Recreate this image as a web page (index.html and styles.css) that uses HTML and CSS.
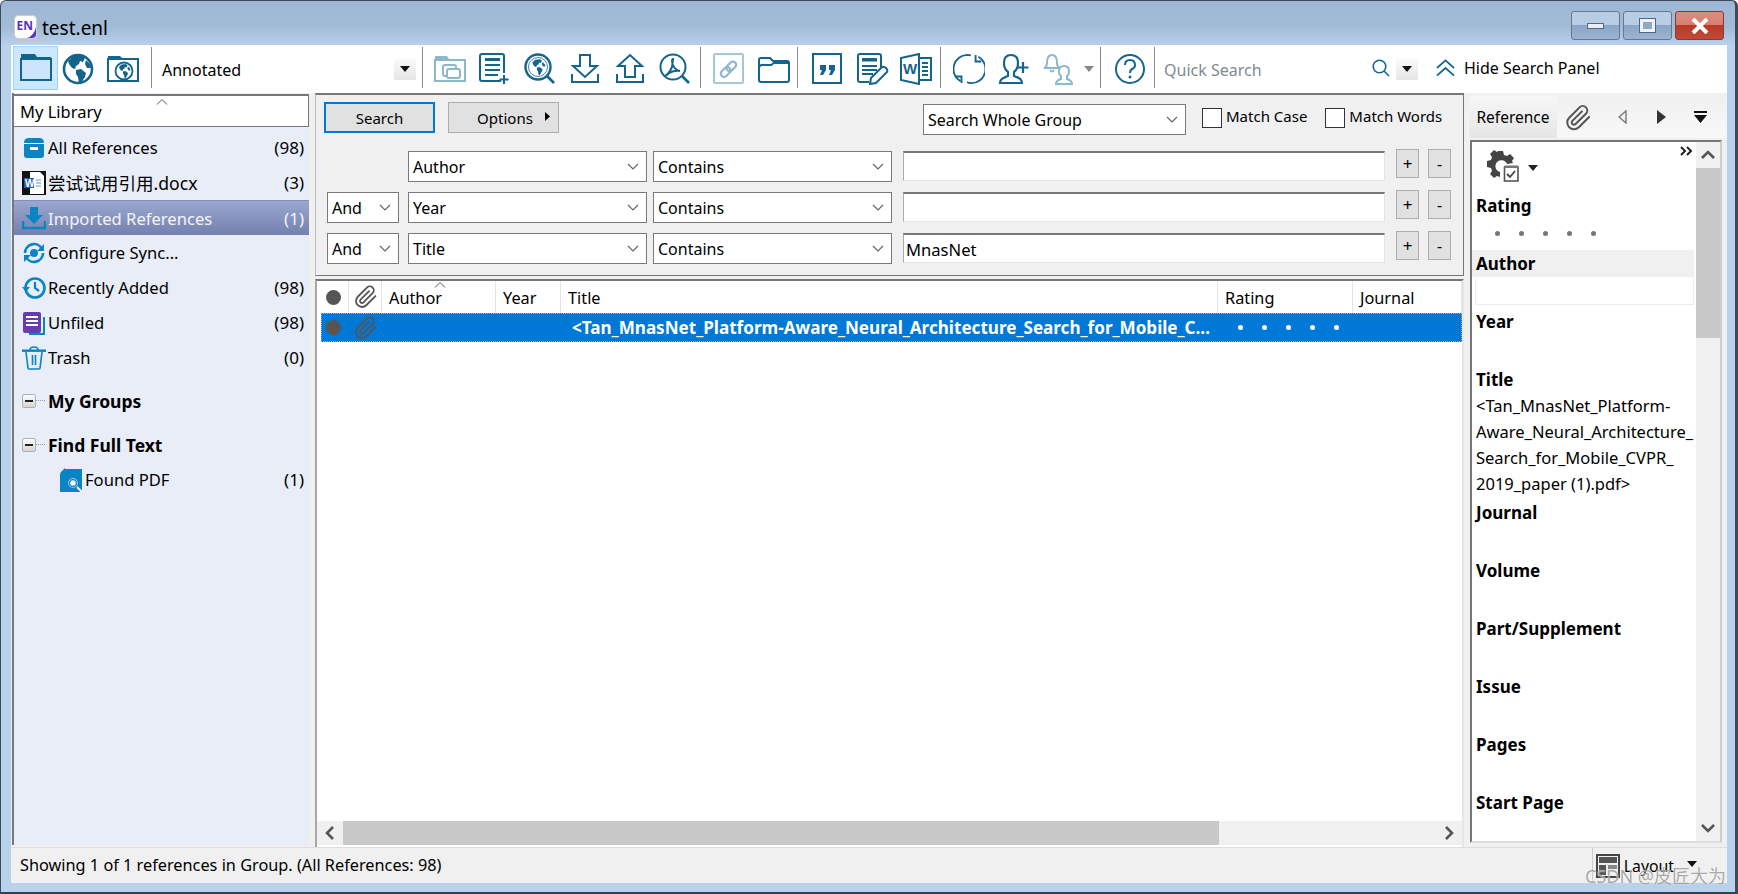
FILE: index.html
```html
<!DOCTYPE html>
<html lang="en">
<head>
<meta charset="utf-8">
<title>test.enl</title>
<link rel="stylesheet" href="styles.css">
</head>
<body>
<svg class="defs" width="0" height="0" aria-hidden="true">
  <symbol id="continents" viewBox="0 0 32 32">
    <path d="M6 8l5-5 9-1 3 3-2 4-3-1-1 3-3 2-1 3-3-1-3-4z"/>
    <path d="M14 17l5-1 5 4-1 4-4 6-2 0-1-6-2-3z"/>
    <path d="M24 7l4 4 1 4-4 0-2-4z"/>
  </symbol>
  <symbol id="clip" viewBox="0 0 24 24">
    <path fill="none" stroke="currentColor" stroke-width="1.8" stroke-linecap="round" stroke-linejoin="round" d="M21.44 11.05l-9.19 9.19a6 6 0 0 1-8.49-8.49l9.19-9.19a4 4 0 0 1 5.66 5.66l-9.2 9.19a2 2 0 0 1-2.83-2.83l8.49-8.48"/>
  </symbol>
  <symbol id="chev" viewBox="0 0 12 8">
    <path fill="none" stroke="#666" stroke-width="1.2" d="M1 1l5 5 5-5"/>
  </symbol>
  <symbol id="caret" viewBox="0 0 10 6">
    <path d="M0 0h10L5 6z"/>
  </symbol>
</svg>

<div class="window">
  <header class="titlebar">
    <svg class="app-icon" viewBox="0 0 23 24"><rect x=".5" y=".5" width="22" height="23" rx="4" fill="#fff" stroke="#ccc"/><path d="M22 12v7q0 4-4 4h-5q7-2 9-11z" fill="#5b2fc0"/><text x="2.5" y="15" class="app-en">EN</text></svg>
    <span class="title-text">test.enl</span>
    <div class="winbtns">
      <div class="winbtn"><span class="gl-min"></span></div>
      <div class="winbtn"><span class="gl-max"></span></div>
      <div class="winbtn close"><svg viewBox="0 0 18 16" class="gl-x"><path d="M2 1l14 14M16 1L2 15" stroke="#fff" stroke-width="4"/></svg></div>
    </div>
  </header>

  <div class="toolbar">
    <div class="tb-active">
      <svg class="ic" viewBox="0 0 32 32"><path d="M1 2h14l2 3h14v4H1z" fill="#14648c"/><rect x="1" y="7" width="30" height="21" fill="#cbe6fc" stroke="#14648c" stroke-width="2"/></svg>
    </div>
    <svg class="ic ic-globe" viewBox="0 0 32 32"><circle cx="16" cy="16" r="14" fill="#fff" stroke="#14648c" stroke-width="2.6"/><use href="#continents" fill="#14648c" width="32" height="32"/></svg>
    <svg class="ic ic-fglobe" viewBox="0 0 32 32"><path d="M1 3h12l2 2h16v3H1z" fill="#14648c"/><rect x="1" y="6" width="30" height="22" fill="#fff" stroke="#14648c" stroke-width="2"/><circle cx="17" cy="18" r="8.5" fill="#fff" stroke="#14648c" stroke-width="1.8"/><use href="#continents" x="9" y="10" width="16" height="16" fill="#14648c"/></svg>
    <div class="sep sep-a"></div>
    <div class="style-name">Annotated</div>
    <div class="dropbtn"><svg class="caret"><use href="#caret"/></svg></div>
    <div class="sep sep-b"></div>

    <svg class="ic ic1" viewBox="0 0 32 32"><g fill="none" stroke="#8db8cc" stroke-width="2"><path d="M1 7h30v21H1z"/><rect x="9" y="12" width="13" height="11" rx="2"/><rect x="13" y="16" width="13" height="9" rx="2" fill="#fff"/></g><path d="M1 3h12l2 3H1z" fill="#8db8cc"/></svg>
    <svg class="ic gap" viewBox="0 0 32 32"><g fill="none" stroke="#14648c" stroke-width="2"><path d="M22 28H3q-2 0-2-2V3q0-2 2-2h20q2 0 2 2v17"/><path d="M6 12h15M6 17h15M6 22h13"/><path d="M25 22v9M20.5 26.5h9"/></g><rect x="6" y="5" width="15" height="3" fill="#14648c"/></svg>
    <svg class="ic gap" viewBox="0 0 32 32"><circle cx="14" cy="14" r="12.5" fill="#fff" stroke="#14648c" stroke-width="2.4"/><use href="#continents" x="5" y="5" width="18" height="18" fill="#14648c"/><circle cx="14" cy="14" r="9.5" fill="none" stroke="#14648c" stroke-width=".8"/><path d="M23 23l7 7" stroke="#14648c" stroke-width="2.6"/></svg>
    <svg class="ic gap" viewBox="0 0 32 32"><g fill="none" stroke="#14648c" stroke-width="2"><path d="M11 2h10v11h7L16 24 4 13h7z"/><path d="M3 21v8h26v-8"/></g></svg>
    <svg class="ic gap" viewBox="0 0 32 32"><g fill="none" stroke="#14648c" stroke-width="2"><path d="M11 24V13H4L16 2l12 11h-7v11z"/><path d="M3 21v8h26v-8"/></g></svg>
    <svg class="ic gap" viewBox="0 0 32 32"><circle cx="14" cy="14" r="12.5" fill="#fff" stroke="#14648c" stroke-width="2"/><path d="M14 6q-2 0 0 6 2 5 7 6-5-1-11 2-3 3-4 3 4-2 7-9 1-8 1-8z" fill="none" stroke="#14648c" stroke-width="2"/><path d="M23 23l7 7" stroke="#14648c" stroke-width="2.6"/></svg>
    <div class="sep sep-c"></div>

    <svg class="ic" viewBox="0 0 32 32"><rect x="1" y="1" width="29" height="29" rx="1" fill="#fff" stroke="#a5c8d8" stroke-width="2"/><g fill="none" stroke="#8db8cc" stroke-width="2.2" transform="rotate(-45 16 16)"><rect x="6" y="12.5" width="11" height="6.5" rx="3.2"/><rect x="14" y="12.5" width="11" height="6.5" rx="3.2"/></g></svg>
    <svg class="ic gap" viewBox="0 0 32 32"><g fill="none" stroke="#14648c" stroke-width="2"><path d="M1 13V7q0-2 2-2h9l3 3h14q2 0 2 2v17q0 2-2 2H3q-2 0-2-2z"/><path d="M1 15q0-3 3-3h9l3-2h15"/></g></svg>
    <div class="sep sep-d"></div>

    <svg class="ic" viewBox="0 0 32 32"><rect x="1" y="1" width="28" height="29" fill="#fff" stroke="#14648c" stroke-width="2"/><path d="M8 12h6v5l-3 5H8l2-5H8zM17 12h6v5l-3 5h-3l2-5h-2z" fill="#14648c"/></svg>
    <svg class="ic gap" viewBox="0 0 32 32"><g fill="none" stroke="#14648c" stroke-width="2"><path d="M12 29H3q-2 0-2-2V3q0-2 2-2h19q2 0 2 2v12"/><path d="M5 13h15M5 17h15M5 21h11"/><path d="M13 31l1-6 11-11q2-1 4 1t1 4L19 30z" fill="#fff"/></g><rect x="5" y="5" width="15" height="3.5" fill="#14648c"/></svg>
    <svg class="ic gap-s" viewBox="0 0 32 32"><path d="M1 5l18-4v30L1 27z" fill="#fff" stroke="#14648c" stroke-width="2"/><path d="M19 5h12v22H19M22 10h6M22 14h6M22 18h6M22 22h6" fill="none" stroke="#14648c" stroke-width="2"/><text x="3" y="21" class="ic-w">W</text></svg>
    <div class="sep sep-e"></div>

    <svg class="ic" viewBox="0 0 34 34"><g fill="none" stroke="#14648c" stroke-width="2"><path d="M27 4a15 15 0 0 1-8 28q-2 0-4-1"/><path d="M8 30A15 15 0 0 1 15 2q2 0 4 .5"/><path d="M24 2v7h6M2 25h7v7"/></g></svg>
    <svg class="ic gap" viewBox="0 0 32 32"><g fill="none" stroke="#14648c" stroke-width="2.2"><path d="M2 30c0-4 3-5 8-7v-4q-4-3-4-9 0-8 7-8t7 8q0 6-4 9v4c5 2 8 3 8 7z"/><path d="M25 9v11M19.5 14.5h11"/></g></svg>
    <svg class="ic gap" viewBox="0 0 32 32"><g fill="none" stroke="#8db8cc" stroke-width="2"><path d="M1 15q3-1 3-5 0-8 5-8t5 8q0 4 3 5z"/><path d="M7 17q2 3 4 0"/><path d="M13 31c0-3 2-4 5-5v-3q-2-1-2-5 0-5 5-5t5 5q0 4-2 5v3c3 1 5 2 5 5z" fill="#fff"/></g></svg>
    <svg class="caret caret-dim"><use href="#caret"/></svg>
    <div class="sep sep-f"></div>
    <svg class="ic" viewBox="0 0 32 32"><circle cx="16" cy="16" r="14" fill="#fff" stroke="#14648c" stroke-width="2"/><path d="M11 12q0-5 5-5t5 5q0 3-3 4-2 1-2 4" fill="none" stroke="#14648c" stroke-width="2"/><circle cx="16" cy="24" r="1.5" fill="#14648c"/></svg>
    <div class="sep sep-g"></div>

    <div class="quick">Quick Search</div>
    <svg class="ic-search" viewBox="0 0 18 18"><circle cx="7.5" cy="7.5" r="6.3" fill="none" stroke="#14648c" stroke-width="1.6"/><path d="M12 12l5 5" stroke="#14648c" stroke-width="1.6"/></svg>
    <div class="dropbtn drop-q"><svg class="caret"><use href="#caret"/></svg></div>
    <svg class="ic-chev" viewBox="0 0 20 18"><path d="M1 9l9-8 9 8M1 17l9-8 9 8" fill="none" stroke="#14648c" stroke-width="1.8"/></svg>
    <div class="hide-label">Hide Search Panel</div>
  </div>

  <div class="main">
    <aside class="sidebar">
      <div class="library">My Library<svg class="sort sort-lib" viewBox="0 0 12 6"><path d="M1 5.5l5-5 5 5" fill="none" stroke="#555"/></svg></div>
      <ul class="groups">
        <li class="grp">
          <svg class="gi" viewBox="0 0 24 24"><path d="M2 7q0-5 5-5h10q5 0 5 5v12q0 3-3 3H5q-3 0-3-3z" fill="#0b84c4"/><rect x="8" y="11" width="8" height="3" fill="#fff"/><rect x="2" y="7" width="20" height="1" fill="#fff"/></svg>
          <span class="gname">All References</span><span class="gcount">(98)</span>
        </li>
        <li class="grp">
          <svg class="gi" viewBox="0 0 24 24"><rect width="24" height="24" fill="#111"/><path d="M8 1h10l4 4v18H8z" fill="#fff"/><rect x="2" y="7" width="10" height="10" fill="#1f5fbf"/><text x="3" y="15.5" class="gi-w">W</text><path d="M14 9h5M14 12h5M14 15h5" stroke="#5a8fd0"/></svg>
          <span class="gname gname-cjk">尝试试用引用.docx</span><span class="gcount">(3)</span>
        </li>
        <li class="grp grp-sel">
          <svg class="gi" viewBox="0 0 24 24"><path d="M8 1h8v8h5l-9 9-9-9h5z" fill="#0b84c4"/><path d="M1 15v7h22v-7" fill="none" stroke="#0b84c4" stroke-width="2.5"/></svg>
          <span class="gname">Imported References</span><span class="gcount">(1)</span>
        </li>
        <li class="grp">
          <svg class="gi" viewBox="0 0 24 24"><g fill="none" stroke="#0b84c4" stroke-width="2.6"><path d="M3 12A9 9 0 0 1 20 8"/><path d="M21 12A9 9 0 0 1 4 16"/></g><path d="M22 3v7h-7zM2 21v-7h7z" fill="#0b84c4"/><circle cx="12" cy="12" r="4" fill="#0b84c4"/></svg>
          <span class="gname">Configure Sync...</span>
        </li>
        <li class="grp">
          <svg class="gi" viewBox="0 0 24 24"><circle cx="13" cy="12" r="9.5" fill="none" stroke="#0b84c4" stroke-width="2.6"/><path d="M0 11h8l-4 5z" fill="#0b84c4"/><path d="M13 6v6l4 3" fill="none" stroke="#0b84c4" stroke-width="2.2"/></svg>
          <span class="gname">Recently Added</span>
          <span class="gcount">(98)</span>
        </li>
        <li class="grp">
          <svg class="gi" viewBox="0 0 24 24"><path d="M22 6v17H7" fill="none" stroke="#0b84c4" stroke-width="2"/><rect x="1" y="1" width="18" height="21" rx="2" fill="#6a3ab0"/><path d="M4 6h12M4 10h12M4 14h12" stroke="#fff" stroke-width="2"/></svg>
          <span class="gname">Unfiled</span><span class="gcount">(98)</span>
        </li>
        <li class="grp">
          <svg class="gi" viewBox="0 0 24 24"><g fill="none" stroke="#0b84c4" stroke-width="1.6"><path d="M4 6l2 16q0 1 1 1h10q1 0 1-1l2-16"/><path d="M10.5 9v10M13.5 9v10"/><path d="M8 4q0-3 4-3t4 3"/></g><rect y="3.5" width="24" height="2.4" fill="#0b84c4"/></svg>
          <span class="gname">Trash</span><span class="gcount">(0)</span>
        </li>
        <li class="grp grp-head grp-head-a">
          <span class="expander"><span class="minus"></span></span><span class="dots-line"></span>
          <span class="gname bold">My Groups</span>
        </li>
        <li class="grp grp-head grp-head-b">
          <span class="expander"><span class="minus"></span></span><span class="dots-line"></span>
          <span class="gname bold">Find Full Text</span>
        </li>
        <li class="grp grp-child">
          <svg class="gi" viewBox="0 0 24 24"><path d="M6 1h17v23H1V6z" fill="#0b84c4"/><path d="M1 5l5-5v5z" fill="#0b84c4"/><circle cx="14" cy="15" r="5.5" fill="#fff" stroke="#0b84c4" stroke-width="1.5"/><circle cx="14" cy="15" r="3.5" fill="#fff" stroke="#0b84c4" stroke-width="1.5"/><path d="M18 19l5 5" stroke="#fff" stroke-width="2"/></svg>
          <span class="gname">Found PDF</span><span class="gcount">(1)</span>
        </li>
      </ul>
    </aside>

    <section class="center">
      <div class="search">
        <div class="search-top">
          <button class="btn btn-search">Search</button>
          <button class="btn btn-options">Options<svg class="tri" viewBox="0 0 5 9"><path d="M0 0l5 4.5L0 9z"/></svg></button>
          <div class="sel sel-group">Search Whole Group<svg class="chev"><use href="#chev"/></svg></div>
          <span class="box box-a"></span><span class="lbl">Match Case</span>
          <span class="box box-b"></span><span class="lbl">Match Words</span>
        </div>
        <div class="crit">
          <div class="sel-spacer"></div>
          <div class="sel sel-field">Author<svg class="chev"><use href="#chev"/></svg></div>
          <div class="sel sel-op">Contains<svg class="chev"><use href="#chev"/></svg></div>
          <div class="input"></div>
          <div class="pm pm-plus">+</div><div class="pm pm-minus">-</div>
        </div>
        <div class="crit">
          <div class="sel sel-bool">And<svg class="chev"><use href="#chev"/></svg></div>
          <div class="sel sel-field">Year<svg class="chev"><use href="#chev"/></svg></div>
          <div class="sel sel-op">Contains<svg class="chev"><use href="#chev"/></svg></div>
          <div class="input"></div>
          <div class="pm pm-plus">+</div><div class="pm pm-minus">-</div>
        </div>
        <div class="crit">
          <div class="sel sel-bool">And<svg class="chev"><use href="#chev"/></svg></div>
          <div class="sel sel-field">Title<svg class="chev"><use href="#chev"/></svg></div>
          <div class="sel sel-op">Contains<svg class="chev"><use href="#chev"/></svg></div>
          <div class="input">MnasNet</div>
          <div class="pm pm-plus">+</div><div class="pm pm-minus">-</div>
        </div>
      </div>

      <div class="table">
        <div class="thead">
          <div class="th c-dot"><span class="dot"></span></div>
          <div class="th c-clip"><svg class="clip"><use href="#clip"/></svg></div>
          <div class="th c-author">Author<svg class="sort sort-au" viewBox="0 0 12 6"><path d="M1 5.5l5-5 5 5" fill="none" stroke="#555"/></svg></div>
          <div class="th c-year">Year</div>
          <div class="th c-title">Title</div>
          <div class="th c-rating">Rating</div>
          <div class="th c-journal">Journal</div>
        </div>
        <div class="trow">
          <div class="td r-dot"><span class="dot"></span></div>
          <div class="td r-clip"><svg class="clip"><use href="#clip"/></svg></div>
          <div class="td r-blank"></div>
          <div class="td r-title">&lt;Tan_MnasNet_Platform-Aware_Neural_Architecture_Search_for_Mobile_C...</div>
          <div class="td r-rating"><i></i><i></i><i></i><i></i><i></i></div>
        </div>
        <div class="tbody-fill"></div>
        <div class="hscroll">
          <div class="arrow"><svg viewBox="0 0 10 14" class="ar-h"><path d="M8 1L2 7l6 6" fill="none" stroke="#555" stroke-width="2.6"/></svg></div>
          <div class="hthumb"></div>
          <div class="hrest"></div>
          <div class="arrow"><svg viewBox="0 0 10 14" class="ar-h"><path d="M2 1l6 6-6 6" fill="none" stroke="#555" stroke-width="2.6"/></svg></div>
        </div>
      </div>
    </section>

    <aside class="right">
      <div class="tabs">
        <div class="tab">Reference</div>
        <svg class="clip tab-clip"><use href="#clip"/></svg>
        <svg class="tab-tri tab-prev" viewBox="0 0 9 14"><path d="M8 1L1 7l7 6z" fill="none" stroke="#777" stroke-width="1.4"/></svg>
        <svg class="tab-tri tab-next" viewBox="0 0 9 14"><path d="M0 0l9 7-9 7z" fill="#333"/></svg>
        <svg class="tab-more" viewBox="0 0 13 12"><path d="M0 0h13v2H0zM0 4h13L6.500 12z" fill="#111"/></svg>
      </div>
      <div class="pane">
        <div class="pane-body">
          <div class="pane-tools">
            <svg class="gear" viewBox="0 0 32 32"><path d="M11 1h5l1 4 3 1 3-2 4 4-2 3 1 2-6 1a6 6 0 1 0-7 8l0 5-3-1-3 2-4-4 2-3-1-3-4-1v-6l4-1 1-3-2-3 4-4 3 2 1-1z" fill="#444"/><rect x="17.5" y="17" width="13.5" height="14" fill="#fff" stroke="#555" stroke-width="1.6"/><path d="M20 24l3 3 5-6" fill="none" stroke="#444" stroke-width="1.8"/><rect x="17.5" y="15.5" width="13.5" height="2.5" fill="#777"/></svg>
            <svg class="caret caret-gear"><use href="#caret"/></svg>
            <svg class="more-r" viewBox="0 0 13 10"><path d="M1 1l4 4-4 4M7 1l4 4-4 4" fill="none" stroke="#222" stroke-width="2"/></svg>
          </div>
          <div class="fld"><div class="fl">Rating</div><div class="fv rating"><i></i><i></i><i></i><i></i><i></i></div></div>
          <div class="fld fld-on"><div class="fl">Author</div><div class="fv fv-edit"></div></div>
          <div class="fld"><div class="fl">Year</div></div>
          <div class="fld fld-auto"><div class="fl">Title</div><div class="fv fv-text">&lt;Tan_MnasNet_Platform-<br>Aware_Neural_Architecture_<br>Search_for_Mobile_CVPR_<br>2019_paper (1).pdf&gt;</div></div>
          <div class="fld"><div class="fl">Journal</div></div>
          <div class="fld"><div class="fl">Volume</div></div>
          <div class="fld"><div class="fl">Part/Supplement</div></div>
          <div class="fld"><div class="fl">Issue</div></div>
          <div class="fld"><div class="fl">Pages</div></div>
          <div class="fld"><div class="fl">Start Page</div></div>
        </div>
        <div class="vscroll">
          <div class="varrow"><svg viewBox="0 0 14 10" class="ar-v"><path d="M1 8l6-6 6 6" fill="none" stroke="#555" stroke-width="2.6"/></svg></div>
          <div class="vthumb"></div>
          <div class="vrest"></div>
          <div class="varrow"><svg viewBox="0 0 14 10" class="ar-v"><path d="M1 2l6 6 6-6" fill="none" stroke="#555" stroke-width="2.6"/></svg></div>
        </div>
      </div>
    </aside>
  </div>

  <footer class="status">
    <span class="status-text">Showing 1 of 1 references in Group. (All References: 98)</span>
    <div class="layout">
      <svg class="layout-ic" viewBox="0 0 24 24"><rect x="1" y="1" width="22" height="22" fill="none" stroke="#444" stroke-width="2"/><path d="M3 3h18v6H3zM3 11h7v10H3z" fill="#555"/><path d="M12 11h9v4h-9z" fill="#888"/></svg>
      <span class="layout-text">Layout</span>
      <svg class="caret caret-layout"><use href="#caret"/></svg>
    </div>
  </footer>
  <div class="watermark">CSDN @皮匠大为</div>
</div>
</body>
</html>
```
FILE: styles.css
```css
* { box-sizing: border-box; }
html, body { margin: 0; padding: 0; }
body {
  width: 1738px; height: 894px; overflow: hidden;
  font-family: "Noto Sans", "Noto Sans CJK SC", sans-serif;
  font-size: 16px; color: #000;
}
.defs { position: absolute; }
ul { list-style: none; margin: 0; padding: 0; }
button { font: inherit; color: inherit; padding: 0; }

.window {
  position: relative;
  width: 1738px; height: 894px;
  border: 1px solid #404a55; border-bottom: 2px solid #1a4a5a; border-right-width: 3px;
  border-radius: 6px 6px 0 0;
  padding: 1px 8px 0 10px;
  background: linear-gradient(#9db7d4 0, #a2bbd7 26px, #b8d1ec 45px, #b9d2ec 100%);
  display: flex; flex-direction: column;
}

/* title bar */
.titlebar { height: 43px; flex: none; display: flex; align-items: center; padding: 8px 3px 0 3px; }
.app-icon { width: 23px; height: 24px; margin-right: 5px; margin-top: -2px; }
.app-en { font: 700 12px "Noto Sans", sans-serif; fill: #5b2fc0; }
.title-text { font-size: 19px; line-height: 24px; }
.winbtns { margin-left: auto; display: flex; gap: 3px; margin-top: -4px; }
.winbtn {
  width: 49px; height: 29px; border: 1px solid #66788e; border-radius: 3px;
  background: linear-gradient(#b8cde4 0, #b8cde4 50%, #8aa6c6 50%, #9ab5d3 100%);
  display: flex; align-items: center; justify-content: center;
}
.winbtn.close { background: linear-gradient(#dc8d80 0, #d47f70 50%, #b73a28 50%, #c04a35 100%); border-color: #8a3a30; }
.gl-min { width: 17px; height: 6px; background: #e8eef5; border: 1px solid #556a80; }
.gl-max { width: 15px; height: 13px; border: 3px solid #eef2f7; outline: 1px solid #4f6880; background: #90a9c5; }
.gl-x { width: 18px; height: 16px; }

/* toolbar */
.toolbar { height: 48px; flex: none; background: #fff; display: flex; align-items: center; padding-left: 2px; }
.tb-active {
  width: 45px; height: 44px; margin-top: -3px;
  background: #cce8ff; border: 1px solid #99d1ff;
  display: flex; align-items: center; justify-content: center;
}
.ic { width: 32px; height: 32px; flex: none; }
.ic-w { font: 700 15px "Liberation Sans", sans-serif; fill: #14648c; }
.ic-globe { margin-left: 4px; }
.ic-fglobe { margin-left: 13px; }
.gap { margin-left: 13px; }
.gap-s { margin-left: 11px; }
.sep { width: 1px; height: 41px; background: #8c8c8c; flex: none; margin-top: -3px; }
.sep-a { margin-left: 12px; }
.sep-b { margin-left: 6px; margin-right: 11px; }
.sep-c { margin-left: 9px; margin-right: 12px; }
.sep-d { margin-left: 7px; margin-right: 14px; }
.sep-e { margin-left: 8px; margin-right: 12px; }
.sep-f { margin-left: 6px; margin-right: 13px; }
.sep-g { margin-left: 8px; margin-right: 9px; }
.style-name { width: 242px; padding-left: 10px; margin-top: 2px; }
.dropbtn {
  width: 22px; height: 22px; background: linear-gradient(#fbfbfb, #e6e6e6);
  display: flex; align-items: center; justify-content: center; flex: none;
}
.caret { width: 10px; height: 6px; fill: #111; flex: none; }
.caret-dim { fill: #888; margin-left: 9px; }
.quick { width: 208px; color: #808a90; margin-top: 2px; }
.ic-search { width: 18px; height: 18px; margin-top: -3px; }
.drop-q { margin-left: 6px; }
.ic-chev { width: 19px; height: 18px; margin-left: 18px; margin-top: -2px; }
.hide-label { margin-left: 9px; margin-top: -2px; }

/* layout */
.main { height: 754px; flex: none; display: flex; background: #f0f0f0; padding-left: 1px; }

/* sidebar */
.sidebar { width: 297px; flex: none; background: #e8edf8; border-left: 2px solid #777; height: 752px; }
.library {
  position: relative; height: 33px; background: #fff;
  border: 1px solid #777; border-top-width: 2px; border-left: 0;
  padding-left: 6px; line-height: 31px; font-size: 16.5px;
  margin-top: 1px;
}
.sort { position: absolute; width: 12px; height: 6px; }
.sort-lib { left: 142px; top: 3px; }
.groups { padding-top: 3px; }
.grp { height: 35px; display: flex; align-items: center; padding: 0 5px 0 8px; }
.gi { width: 24px; height: 24px; flex: none; margin-right: 2px; }
.gi-w { font: 700 10px "Liberation Sans", sans-serif; fill: #fff; }
.gname { flex: 1; white-space: nowrap; font-size: 16.6px; }
.gname-cjk { font-size: 17.6px; }
.gcount { flex: none; font-size: 17px; }
.grp-sel { background: linear-gradient(#9aa8cf, #7480ae); color: #f4f4fa; border-top: 1px solid #8290bb; }
.grp-head-a { margin-top: 8px; }
.grp-head-b { margin-top: 9px; }
.gname.bold { font-weight: 700; font-size: 17.5px; }
.expander {
  width: 14px; height: 14px; flex: none; border: 1px solid #a3b3c8; border-radius: 2px;
  background: linear-gradient(#fff, #d8d4c8);
  display: flex; align-items: center; justify-content: center;
}
.minus { width: 8px; height: 2px; background: #222; }
.dots-line { width: 9px; flex: none; border-top: 1px dotted #8fa0b8; margin-right: 3px; }
.grp-child { padding-left: 45px; }

/* center */
.center { width: 1149px; flex: none; margin-left: 6px; display: flex; flex-direction: column; height: 754px; }
.search {
  height: 183px; flex: none; background: #f0f0f0;
  border: 1px solid #777; border-top-width: 2px; border-left-color: #bbb;
  padding: 7px 0 0 8px;
}
.search-top { display: flex; height: 33px; align-items: flex-start; margin-bottom: 16px; }
.btn { height: 31px; display: flex; align-items: center; justify-content: center; font-size: 15px; }
.btn-search { width: 111px; background: #e1e1e1; border: 2px solid #0078d7; }
.btn-options { width: 111px; margin-left: 13px; background: #e1e1e1; border: 1px solid #adadad; padding-left: 20px; }
.tri { width: 5px; height: 9px; margin-left: 12px; margin-top: -2px; }
.sel {
  background: #fff; border: 1px solid #7a7a7a; height: 31px;
  display: flex; align-items: center; justify-content: space-between;
  padding: 0 7px 0 4px; flex: none;
}
.chev { width: 12px; height: 8px; flex: none; }
.sel-group { width: 263px; margin-left: 364px; margin-top: 2px; }
.box { width: 20px; height: 20px; background: #fff; border: 1px solid #333; flex: none; margin-top: 6px; }
.box-a { margin-left: 16px; }
.box-b { margin-left: 18px; }
.lbl { margin-left: 4px; margin-top: 4px; font-size: 15px; white-space: nowrap; }
.crit { display: flex; height: 31px; margin-bottom: 10px; padding-left: 3px; }
.sel-bool { width: 72px; }
.sel-spacer { width: 72px; flex: none; }
.sel-field { width: 239px; margin-left: 9px; }
.sel-op { width: 239px; margin-left: 6px; }
.input {
  width: 482px; margin-left: 11px; height: 30px; background: #fff;
  border: 1px solid #e4e4e4; border-top: 2px solid #777; border-left: 1px solid #aaa;
  padding-left: 2px; line-height: 29px; flex: none; font-size: 16.6px;
}
.pm {
  width: 23px; height: 29px; margin-top: -2px; background: #e1e1e1; border: 1px solid #adadad;
  display: flex; align-items: center; justify-content: center; flex: none;
}
.pm-plus { margin-left: 11px; font-size: 17px; }
.pm-minus { margin-left: 9px; }

/* table */
.table {
  flex: 1; margin-top: 3px; background: #fff;
  border-top: 2px solid #777; border-left: 2px solid #a8a8a8; border-right: 2px solid #e6e6e6;
  display: flex; flex-direction: column; min-height: 0;
}
.thead { height: 32px; flex: none; display: flex; background: #fff; }
.th {
  position: relative; height: 100%; border-right: 1px solid #e4e4e4;
  display: flex; align-items: center; padding: 2px 0 0 7px; flex: none; font-size: 16.3px;
}
.c-dot { width: 32px; padding: 0 0 0 9px; }
.c-clip { width: 33px; padding: 0 0 0 5px; }
.c-author { width: 114px; }
.c-year { width: 65px; }
.c-title { width: 657px; }
.c-rating { width: 135px; }
.c-journal { width: 109px; padding-left: 7px; }
.sort-au { left: 52px; top: 1px; }
.dot { width: 15px; height: 15px; border-radius: 50%; background: #555; flex: none; }
.clip { width: 24px; height: 24px; color: #555; flex: none; }
.trow {
  height: 29px; flex: none; margin-left: 4px; background: #0078d7;
  outline: 1px dotted #e0a060; outline-offset: -1px;
  display: flex; align-items: center; color: #fff; font-weight: 700;
}
.td { flex: none; display: flex; align-items: center; }
.r-dot { width: 28px; padding-left: 5px; }
.r-clip { width: 33px; padding-left: 5px; }
.r-blank { width: 179px; }
.r-title { width: 657px; padding-left: 11px; white-space: nowrap; overflow: hidden; font-size: 17.1px; }
.r-rating { gap: 19px; padding-left: 20px; }
.r-rating i { width: 5px; height: 5px; border-radius: 50%; background: #fff; }
.tbody-fill { flex: 1; }
.hscroll { height: 24px; flex: none; display: flex; background: #f0f0f0; margin-bottom: 2px; }
.arrow { width: 26px; flex: none; display: flex; align-items: center; justify-content: center; }
.ar-h { width: 10px; height: 14px; }
.hthumb { width: 876px; background: #c8c8c8; flex: none; }
.hrest { flex: 1; }

/* right */
.right { width: 259px; flex: none; margin-left: 4px; display: flex; flex-direction: column; height: 754px; }
.tabs { height: 45px; flex: none; display: flex; align-items: flex-end; background: linear-gradient(#f0f0f0, #f8f8f8); }
.tab {
  width: 88px; height: 42px; margin-left: 1px;
  background: linear-gradient(#f6f6f6, #e6e6e6);
  display: flex; align-items: center; justify-content: center; font-size: 15.5px;
}
.tab-clip { width: 27px; height: 30px; margin: 0 0 5px 8px; color: #555; }
.tab-tri { width: 9px; height: 14px; margin-bottom: 14px; }
.tab-prev { margin-left: 26px; }
.tab-next { margin-left: 30px; }
.tab-more { width: 13px; height: 12px; margin: 0 0 15px 28px; }
.pane {
  width: 252px; margin-left: 2px; height: 703px; flex: none; margin-top: 2px;
  border: 2px solid #777; border-right: 2px solid #ccc; border-bottom: 2px solid #ddd;
  display: flex; background: #fff; overflow: hidden;
}
.pane-body { width: 224px; flex: none; overflow: hidden; }
.pane-tools { position: relative; height: 50px; display: flex; align-items: flex-start; padding: 8px 0 0 15px; }
.gear { width: 32px; height: 32px; flex: none; }
.caret-gear { margin: 15px 0 0 9px; fill: #222; }
.more-r { position: absolute; right: 3px; top: 4px; width: 13px; height: 10px; }
.fld { height: 58.1px; padding: 0 0 0 4px; }
.fld-auto { height: 132.5px; }
.fl { height: 27px; line-height: 27px; font-weight: 700; font-size: 17px; margin-left: -4px; padding-left: 4px; }
.fld-on .fl { background: #f0f0f0; margin-right: 2px; }
.fv-edit { height: 28px; border: 1px solid #eee; border-top: 0; margin-right: 2px; margin-left: -1px; }
.fv-text { line-height: 26px; font-size: 16.5px; white-space: nowrap; }
.rating { display: flex; gap: 19px; padding: 12px 0 0 19px; }
.rating i { width: 5px; height: 5px; border-radius: 50%; background: #777; }
.vscroll { width: 24px; flex: none; display: flex; flex-direction: column; background: #f0f0f0; }
.varrow { height: 26px; flex: none; display: flex; align-items: center; justify-content: center; }
.ar-v { width: 14px; height: 10px; }
.vthumb { height: 170px; background: #c8c8c8; flex: none; }
.vrest { flex: 1; }

/* status */
.status {
  height: 36px; flex: none; background: #f0f0f0; border-top: 1px solid #ddd;
  display: flex; align-items: center; padding-left: 9px;
}
.status-text { font-size: 16.3px; line-height: 20px; margin-top: -2px; }
.layout { margin-left: auto; display: flex; align-items: center; height: 100%; border-left: 1px solid #ccc; padding-left: 3px; padding-right: 30px; }
.layout-ic { width: 24px; height: 24px; margin-right: 4px; }
.layout-text { font-size: 15.8px; }
.caret-layout { margin-left: 13px; margin-top: -4px; }

.watermark {
  position: absolute; right: 9px; bottom: 4px;
  font-size: 18px; color: rgba(110,110,110,.6); text-shadow: 0 0 1px #fff;
  white-space: nowrap;
}
```
